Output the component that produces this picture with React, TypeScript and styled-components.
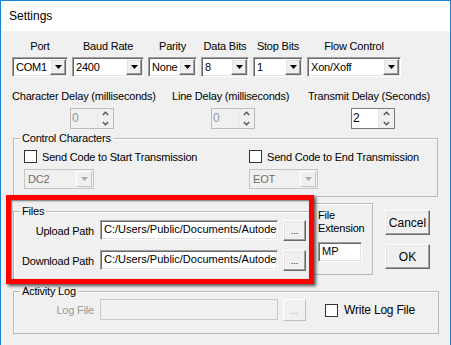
import React from 'react'
import styled, { createGlobalStyle, css } from 'styled-components'

const GlobalStyle = createGlobalStyle`
  html, body {
    margin: 0;
    padding: 0;
    background: #fff;
  }
  * {
    box-sizing: border-box;
  }
`

const sunken = css`
  border: 1px solid;
  border-color: #a0a0a0 #fff #fff #a0a0a0;
  box-shadow: inset 1px 1px 0 #696969, inset -1px -1px 0 #e3e3e3;
`

const raised = css`
  background: #f0f0f0;
  border: 1px solid;
  border-color: #fff #696969 #696969 #fff;
  box-shadow: inset -1px -1px 0 #a0a0a0, inset 1px 1px 0 #e3e3e3;
`

const Window = styled.div`
  width: 451px;
  height: 345px;
  border: 1px solid #1883d7;
  border-bottom: none;
  background: #f0f0f0;
  display: flex;
  flex-direction: column;
  overflow: hidden;
  font-family: 'Liberation Sans', Arial, sans-serif;
  font-size: 11px;
  letter-spacing: -0.2px;
  color: #000;
`

const TitleBar = styled.header`
  height: 30px;
  flex: none;
  background: #fff;
  display: flex;
  align-items: center;
  padding-left: 8px;
  font-size: 12px;
  letter-spacing: 0;
`

const Body = styled.main`
  position: relative;
  flex: 1;
  padding: 9px 0 0 11px;
`

const ComboGrid = styled.div`
  display: grid;
  grid-template-columns: 56px 72px 49px 48px 50px 94px;
  column-gap: 4px;
  row-gap: 4px;
`

const TopLabel = styled.div`
  height: 13px;
  line-height: 13px;
  text-align: center;
  white-space: nowrap;
`

const Combo = styled.div<{ $disabled?: boolean; $w?: number }>`
  ${sunken};
  width: ${p => (p.$w ? `${p.$w}px` : 'auto')};
  height: 20px;
  display: flex;
  align-items: center;
  padding-left: 3px;
  background: ${p => (p.$disabled ? '#f0f0f0' : '#fff')};
  color: ${p => (p.$disabled ? '#6d6d6d' : '#000')};
  ${p =>
    p.$disabled &&
    css`
      border-color: #c4c4c4;
      box-shadow: none;
    `}
`

const ComboText = styled.span`
  flex: 1;
  overflow: hidden;
  white-space: nowrap;
  line-height: 13px;
`

const DropButton = styled.span<{ $disabled?: boolean }>`
  ${raised};
  align-self: stretch;
  width: 16px;
  margin: 1px;
  display: flex;
  align-items: center;
  justify-content: center;
  ${p =>
    p.$disabled &&
    css`
      border-color: #fff #c4c4c4 #c4c4c4 #fff;
      box-shadow: none;
    `}
`

const DelayRow = styled.div`
  display: flex;
  margin-top: 13px;
`

const DelayField = styled.div<{ $w: number; $gap: number }>`
  width: ${p => p.$w}px;
  margin-left: ${p => p.$gap}px;
  display: flex;
  flex-direction: column;
  gap: 5px;
`

const FieldLabel = styled.div`
  height: 13px;
  line-height: 13px;
  white-space: nowrap;
`

const Spin = styled.div<{ $disabled?: boolean; $indent: number }>`
  margin-left: ${p => p.$indent}px;
  width: 44px;
  height: 21px;
  display: flex;
  border: 1px solid ${p => (p.$disabled ? '#bcbcbc' : '#7a7a7a')};
  background: ${p => (p.$disabled ? '#f0f0f0' : '#fff')};
`

const SpinText = styled.span<{ $disabled?: boolean }>`
  flex: 1;
  padding: 2px 0 0 1px;
  font-size: 12px;
  color: ${p => (p.$disabled ? '#8c96a6' : '#000')};
`

const SpinButtons = styled.span`
  width: 16px;
  display: flex;
  flex-direction: column;
  background: #f0f0f0;
  border-left: 1px solid #e6e6e6;
`

const SpinHalf = styled.span`
  flex: 1;
  display: flex;
  align-items: center;
  justify-content: center;
`

const Group = styled.fieldset<{ $w: number; $top: number }>`
  width: ${p => p.$w}px;
  min-width: 0;
  margin: ${p => p.$top}px 0 0 1px;
  padding: 0;
  border: 1px solid #b9b9b9;
  box-shadow: inset 1px 1px 0 #fff;
`

const GroupLegend = styled.legend`
  margin-left: 6px;
  padding: 0 2px;
  line-height: 13px;
  height: 13px;
`

const ControlGrid = styled.div`
  display: grid;
  grid-template-columns: 225px auto;
  row-gap: 6px;
  padding: 5px 0 7px 10px;
`

const CheckRow = styled.label<{ $indent?: number }>`
  display: flex;
  align-items: center;
  gap: 5px;
  height: 13px;
  margin-left: ${p => p.$indent ?? 0}px;
  white-space: nowrap;
`

const CheckBox = styled.span`
  width: 13px;
  height: 13px;
  flex: none;
  background: #fff;
  border: 1px solid #333;
`

const MiddleRow = styled.div`
  display: flex;
  align-items: flex-start;
`

const PathList = styled.div`
  display: flex;
  flex-direction: column;
  gap: 9px;
  padding: 2px 0 8px 8px;
`

const PathRow = styled.div`
  display: flex;
  align-items: flex-start;
`

const PathLabel = styled.span<{ $disabled?: boolean }>`
  width: 72px;
  margin-right: 6px;
  align-self: center;
  text-align: right;
  white-space: nowrap;
  color: ${p => (p.$disabled ? '#9a9a9a' : '#000')};
`

const TextBox = styled.div<{ $w: number; $h?: number; $disabled?: boolean }>`
  ${sunken};
  width: ${p => p.$w}px;
  height: ${p => p.$h ?? 20}px;
  padding: 2px 0 0 3px;
  overflow: hidden;
  white-space: nowrap;
  line-height: 13px;
  letter-spacing: 0;
  background: ${p => (p.$disabled ? '#f0f0f0' : '#fff')};
  ${p =>
    p.$disabled &&
    css`
      border-color: #c8c8c8;
      box-shadow: none;
    `}
`

const BrowseButton = styled.span<{ $disabled?: boolean; $h?: number }>`
  ${raised};
  width: 23px;
  height: ${p => p.$h ?? 21}px;
  margin-left: 5px;
  display: flex;
  align-items: flex-end;
  justify-content: center;
  padding-bottom: 4px;
  font-size: 9px;
  letter-spacing: 0;
  color: ${p => (p.$disabled ? '#a0a0a0' : '#000')};
  ${p =>
    p.$disabled &&
    css`
      border-color: #fff #c0c0c0 #c0c0c0 #fff;
      box-shadow: none;
    `}
`

const ExtensionBox = styled.div`
  width: 60px;
  height: 72px;
  margin: 6px 0 0 1px;
  padding: 5px 0 0 4px;
  border: 1px solid #b9b9b9;
  box-shadow: inset 1px 1px 0 #fff;
`

const ExtensionLabel = styled.div`
  line-height: 13px;
  margin-bottom: 7px;
`

const ButtonColumn = styled.div`
  display: flex;
  flex-direction: column;
  gap: 9px;
  margin: 13px 0 0 12px;
`

const DialogButton = styled.button`
  ${raised};
  width: 45px;
  height: 25px;
  padding: 0;
  font: inherit;
  font-size: 12px;
  color: #000;
`

const LogRow = styled.div`
  display: flex;
  align-items: flex-start;
  padding: 1px 0 12px 8px;
`

const LogCheck = styled(CheckRow)`
  align-self: center;
  margin-left: 19px;
  gap: 6px;
  font-size: 12px;
`

const Highlight = styled.div`
  position: absolute;
  left: 5px;
  top: 164px;
  width: 308px;
  height: 89px;
  border: 5px solid #ff0000;
  box-shadow: inset 1px 1px 2px rgba(0, 0, 0, 0.55),
    2px 2px 3px rgba(0, 0, 0, 0.65);
  pointer-events: none;
`

const Arrow = ({ disabled }: { disabled?: boolean }) => (
  <svg width="7" height="4" viewBox="0 0 7 4">
    <path d="M0 0h7L3.5 4z" fill={disabled ? '#a9a9a9' : '#000'} />
  </svg>
)

const Chevron = ({ up }: { up?: boolean }) => (
  <svg width="7" height="5" viewBox="0 0 7 5">
    <path
      d={up ? 'M0.8 4L3.5 1.2L6.2 4' : 'M0.8 1L3.5 3.8L6.2 1'}
      fill="none"
      stroke="#505050"
      strokeWidth="1.3"
    />
  </svg>
)

const ComboBox = ({ value, disabled, w }: { value: string; disabled?: boolean; w?: number }) => (
  <Combo $disabled={disabled} $w={w}>
    <ComboText>{value}</ComboText>
    <DropButton $disabled={disabled}>
      <Arrow disabled={disabled} />
    </DropButton>
  </Combo>
)

const SpinBox = ({ value, disabled, indent }: { value: string; disabled?: boolean; indent: number }) => (
  <Spin $disabled={disabled} $indent={indent}>
    <SpinText $disabled={disabled}>{value}</SpinText>
    <SpinButtons>
      <SpinHalf>
        <Chevron up />
      </SpinHalf>
      <SpinHalf>
        <Chevron />
      </SpinHalf>
    </SpinButtons>
  </Spin>
)

const comboFields = [
  { label: 'Port', value: 'COM1' },
  { label: 'Baud Rate', value: '2400' },
  { label: 'Parity', value: 'None' },
  { label: 'Data Bits', value: '8' },
  { label: 'Stop Bits', value: '1' },
  { label: 'Flow Control', value: 'Xon/Xoff' },
]

// the reference shows the path cut off by the box at this point
const PATH = 'C:/Users/Public/Documents/Autode'

export default function App() {
  return (
    <>
      <GlobalStyle />
      <Window>
        <TitleBar>Settings</TitleBar>
        <Body>
          <ComboGrid>
            {comboFields.map(f => (
              <TopLabel key={f.label}>{f.label}</TopLabel>
            ))}
            {comboFields.map(f => (
              <ComboBox key={f.label} value={f.value} />
            ))}
          </ComboGrid>

          <DelayRow>
            <DelayField $w={142} $gap={0}>
              <FieldLabel>Character Delay (milliseconds)</FieldLabel>
              <SpinBox value="0" disabled indent={58} />
            </DelayField>
            <DelayField $w={115} $gap={18}>
              <FieldLabel>Line Delay (milliseconds)</FieldLabel>
              <SpinBox value="0" disabled indent={39} />
            </DelayField>
            <DelayField $w={121} $gap={21}>
              <FieldLabel>Transmit Delay (Seconds)</FieldLabel>
              <SpinBox value="2" indent={43} />
            </DelayField>
          </DelayRow>

          <Group $w={425} $top={3}>
            <GroupLegend>Control Characters</GroupLegend>
            <ControlGrid>
              <CheckRow $indent={0}>
                <CheckBox />
                Send Code to Start Transmission
              </CheckRow>
              <CheckRow>
                <CheckBox />
                Send Code to End Transmission
              </CheckRow>
              <ComboBox value="DC2" disabled w={70} />
              <ComboBox value="EOT" disabled w={69} />
            </ControlGrid>
          </Group>

          <MiddleRow>
            <Group $w={299} $top={8}>
              <GroupLegend>Files</GroupLegend>
              <PathList>
                <PathRow>
                  <PathLabel>Upload Path</PathLabel>
                  <TextBox $w={178}>{PATH}</TextBox>
                  <BrowseButton>...</BrowseButton>
                </PathRow>
                <PathRow>
                  <PathLabel>Download Path</PathLabel>
                  <TextBox $w={178}>{PATH}</TextBox>
                  <BrowseButton>...</BrowseButton>
                </PathRow>
              </PathList>
            </Group>
            <ExtensionBox>
              <ExtensionLabel>
                File
                <br />
                Extension
              </ExtensionLabel>
              <TextBox $w={44}>MP</TextBox>
            </ExtensionBox>
            <ButtonColumn>
              <DialogButton>Cancel</DialogButton>
              <DialogButton>OK</DialogButton>
            </ButtonColumn>
          </MiddleRow>

          <Group $w={426} $top={5}>
            <GroupLegend>Activity Log</GroupLegend>
            <LogRow>
              <PathLabel $disabled>Log File</PathLabel>
              <TextBox $w={178} $h={21} $disabled />
              <BrowseButton $disabled $h={22}>
                ...
              </BrowseButton>
              <LogCheck>
                <CheckBox />
                Write Log File
              </LogCheck>
            </LogRow>
          </Group>

          <Highlight />
        </Body>
      </Window>
    </>
  )
}
